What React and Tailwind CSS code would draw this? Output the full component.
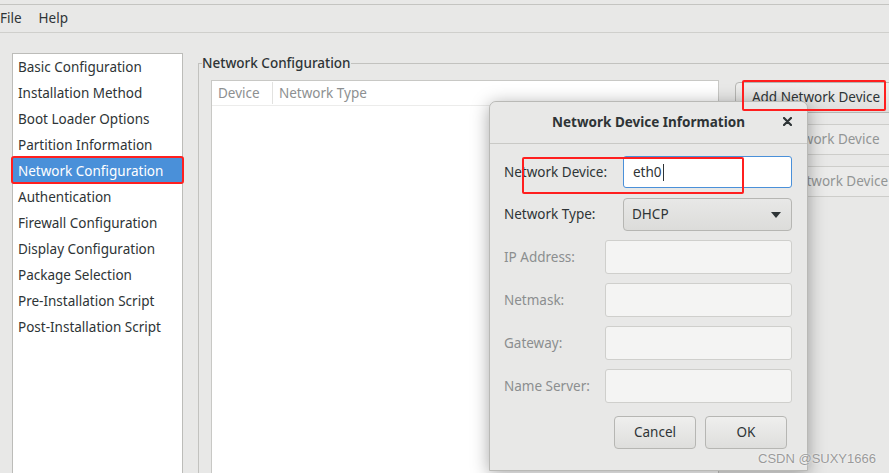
import React from 'react';

const items = [
  'Basic Configuration',
  'Installation Method',
  'Boot Loader Options',
  'Partition Information',
  'Network Configuration',
  'Authentication',
  'Firewall Configuration',
  'Display Configuration',
  'Package Selection',
  'Pre-Installation Script',
  'Post-Installation Script',
];

const fields = ['IP Address:', 'Netmask:', 'Gateway:', 'Name Server:'];

const App = () => {
  return (
    <div
      className="relative w-[889px] h-[473px] overflow-hidden bg-[#e8e8e7] text-[#2e3436] text-[13.5px]"
      style={{ fontFamily: '"Noto Sans", "Open Sans", sans-serif' }}
    >
      {/* top edge + menu bar */}
      <div className="h-[5px] border-b border-[#c4c4c1]" />
      <div className="h-[28px] flex items-center gap-[17px] border-b border-[#cfcfcc] pb-[1px]">
        <span>File</span>
        <span>Help</span>
      </div>

      <div className="flex pt-[20px] pl-[12px]">
        {/* Section list */}
        <div className="w-[171px] h-[440px] bg-white border border-[#bcbcb9] shrink-0">
          {items.map((it) => (
            <div
              key={it}
              className={
                it === 'Network Configuration'
                  ? 'h-[26px] flex items-center pl-[5px] bg-[#4a90d9] text-white'
                  : 'h-[26px] flex items-center pl-[5px]'
              }
            >
              {it}
            </div>
          ))}
        </div>

        {/* Network Configuration frame */}
        <fieldset className="ml-[15px] flex-1 border-l border-t border-[#c2c2bf] min-w-0">
          <legend className="ml-[3px] px-0 font-medium leading-[20px]">Network Configuration</legend>
          <div className="flex gap-[16px] pl-[12px] pt-[7px]">
            <div className="w-[508px] h-[400px] bg-white border border-[#c8c8c5] shrink-0">
              <div className="h-[25px] flex items-center border-b border-[#ececeb] text-[#8d9091]">
                <div className="w-[61px] pl-[6px] border-r border-[#e2e2e0] h-[22px] flex items-center">Device</div>
                <div className="pl-[6px]">Network Type</div>
              </div>
            </div>
            <div className="flex flex-col gap-[11px] pt-[2px] shrink-0">
              <button className="w-[162px] h-[31px] rounded-[4px] border border-[#b6b6b3] bg-gradient-to-b from-[#eeeeed] to-[#dededc] text-[#2e3436] text-center">
                Add Network Device
              </button>
              <button className="w-[162px] h-[31px] rounded-[4px] border border-[#cdcdca] bg-[#ebebea] text-[#929595] text-center">
                Edit Network Device
              </button>
              <button className="w-[162px] h-[31px] rounded-[4px] border border-[#cdcdca] bg-[#ebebea] text-[#929595] text-center">
                Delete Network Device
              </button>
            </div>
          </div>
        </fieldset>
      </div>

      {/* Dialog */}
      <div className="absolute left-[489px] top-[101px] w-[319px] h-[370px] bg-[#e8e8e7] rounded-t-[7px] border border-[#b9b9b6] shadow-[0_3px_18px_rgba(0,0,0,0.35)] flex flex-col">
        <div className="h-[42px] flex items-center justify-center relative border-b border-[#c9c9c6] rounded-t-[7px] bg-[#e8e8e7]">
          <span className="font-bold">Network Device Information</span>
          <svg className="absolute right-[15px] top-[15px]" width="9" height="9" viewBox="0 0 9 9">
            <path d="M1 1l7 7M8 1l-7 7" stroke="#2e3436" strokeWidth="2.2" strokeLinecap="round" />
          </svg>
        </div>
        <div className="px-[14px] pt-[12px] flex flex-col">
          <div className="flex items-center h-[32px]">
            <span className="w-[119px]">Network Device:</span>
            <div className="w-[169px] h-[32px] bg-white border border-[#4a90d9] rounded-[3px] flex items-center pl-[9px]">
              eth0<span className="w-px h-[17px] bg-[#2e3436] ml-px" />
            </div>
          </div>
          <div className="flex items-center h-[33px] mt-[10px]">
            <span className="w-[119px]">Network Type:</span>
            <div className="w-[169px] h-[33px] border border-[#b6b6b3] rounded-[4px] bg-gradient-to-b from-[#e8e8e7] to-[#dcdcda] flex items-center justify-between pl-[8px] pr-[10px]">
              <span>DHCP</span>
              <svg width="10" height="6" viewBox="0 0 10 6">
                <path d="M0 0h10L5 6z" fill="#2e3436" />
              </svg>
            </div>
          </div>
          <div className="flex flex-col gap-[9px] mt-[9px]">
            {fields.map((f) => (
              <div key={f} className="flex items-center h-[34px] text-[#8b8e8f]">
                <span className="w-[101px]">{f}</span>
                <div className="w-[187px] h-[34px] bg-[#f4f4f3] border border-[#cfcfcc] rounded-[3px]" />
              </div>
            ))}
          </div>
          <div className="flex justify-end gap-[9px] mt-[13px] pr-[6px]">
            <button className="w-[82px] h-[33px] rounded-[4px] border border-[#b6b6b3] bg-gradient-to-b from-[#efefee] to-[#dededc]">
              Cancel
            </button>
            <button className="w-[82px] h-[33px] rounded-[4px] border border-[#b6b6b3] bg-gradient-to-b from-[#efefee] to-[#dededc]">
              OK
            </button>
          </div>
        </div>
      </div>

      {/* red annotation boxes */}
      <div className="absolute left-[11px] top-[156px] w-[173px] h-[28px] border-2 border-[#ff1f1f] rounded-[3px]" />
      <div className="absolute left-[742px] top-[80px] w-[144px] h-[31px] border-2 border-[#ff1f1f] rounded-[2px]" />
      <div className="absolute left-[522px] top-[157px] w-[222px] h-[37px] border-2 border-[#ff1f1f] rounded-[2px]" />

      {/* watermark */}
      <div
        className="absolute left-[758px] top-[449px] text-[13px] text-[#9a9a9a] [text-shadow:0_0_2px_#fff]"
        style={{ fontFamily: '"Liberation Sans", sans-serif' }}
      >
        CSDN @SUXY1666
      </div>
    </div>
  );
};

export default App;
